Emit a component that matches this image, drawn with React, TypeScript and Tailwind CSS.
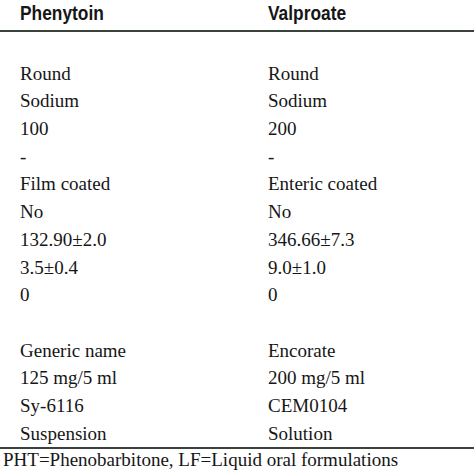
const rows: [string, string][] = [
  ['', ''],
  ['Round', 'Round'],
  ['Sodium', 'Sodium'],
  ['100', '200'],
  ['-', '-'],
  ['Film coated', 'Enteric coated'],
  ['No', 'No'],
  ['132.90±2.0', '346.66±7.3'],
  ['3.5±0.4', '9.0±1.0'],
  ['0', '0'],
  ['', ''],
  ['Generic name', 'Encorate'],
  ['125 mg/5 ml', '200 mg/5 ml'],
  ['Sy-6116', 'CEM0104'],
  ['Suspension', 'Solution'],
]

export default function App() {
  return (
    <div className="w-[474px] h-[474px] bg-white text-[#161616] overflow-hidden">
      {/* column heads, condensed bold sans */}
      <div className="flex h-[30px] pt-[3px] font-['Liberation_Sans',sans-serif] text-[19.5px] leading-[21px] font-bold">
        <div className="w-[268px] pl-[20px]">
          <span className="inline-block origin-left scale-x-[0.89]">Phenytoin</span>
        </div>
        <div>
          <span className="inline-block origin-left scale-x-[0.89]">Valproate</span>
        </div>
      </div>
      <div className="h-[2px] bg-[#3a433a]" />

      <div className="font-['Liberation_Serif',serif] text-[19px] leading-[27.7px]">
        {rows.map((r, i) => (
          <div key={i} className="flex h-[27.7px]">
            <div className="w-[268px] pl-[20px] whitespace-nowrap">{r[0]}</div>
            <div className="whitespace-nowrap">{r[1]}</div>
          </div>
        ))}
      </div>
      <div className="h-[2px] bg-[#3a433a]" />

      <div className="font-['Liberation_Serif',serif] text-[19px] leading-[21px] pl-[3px] whitespace-nowrap">
        PHT=Phenobarbitone, LF=Liquid oral formulations
      </div>
    </div>
  )
}
